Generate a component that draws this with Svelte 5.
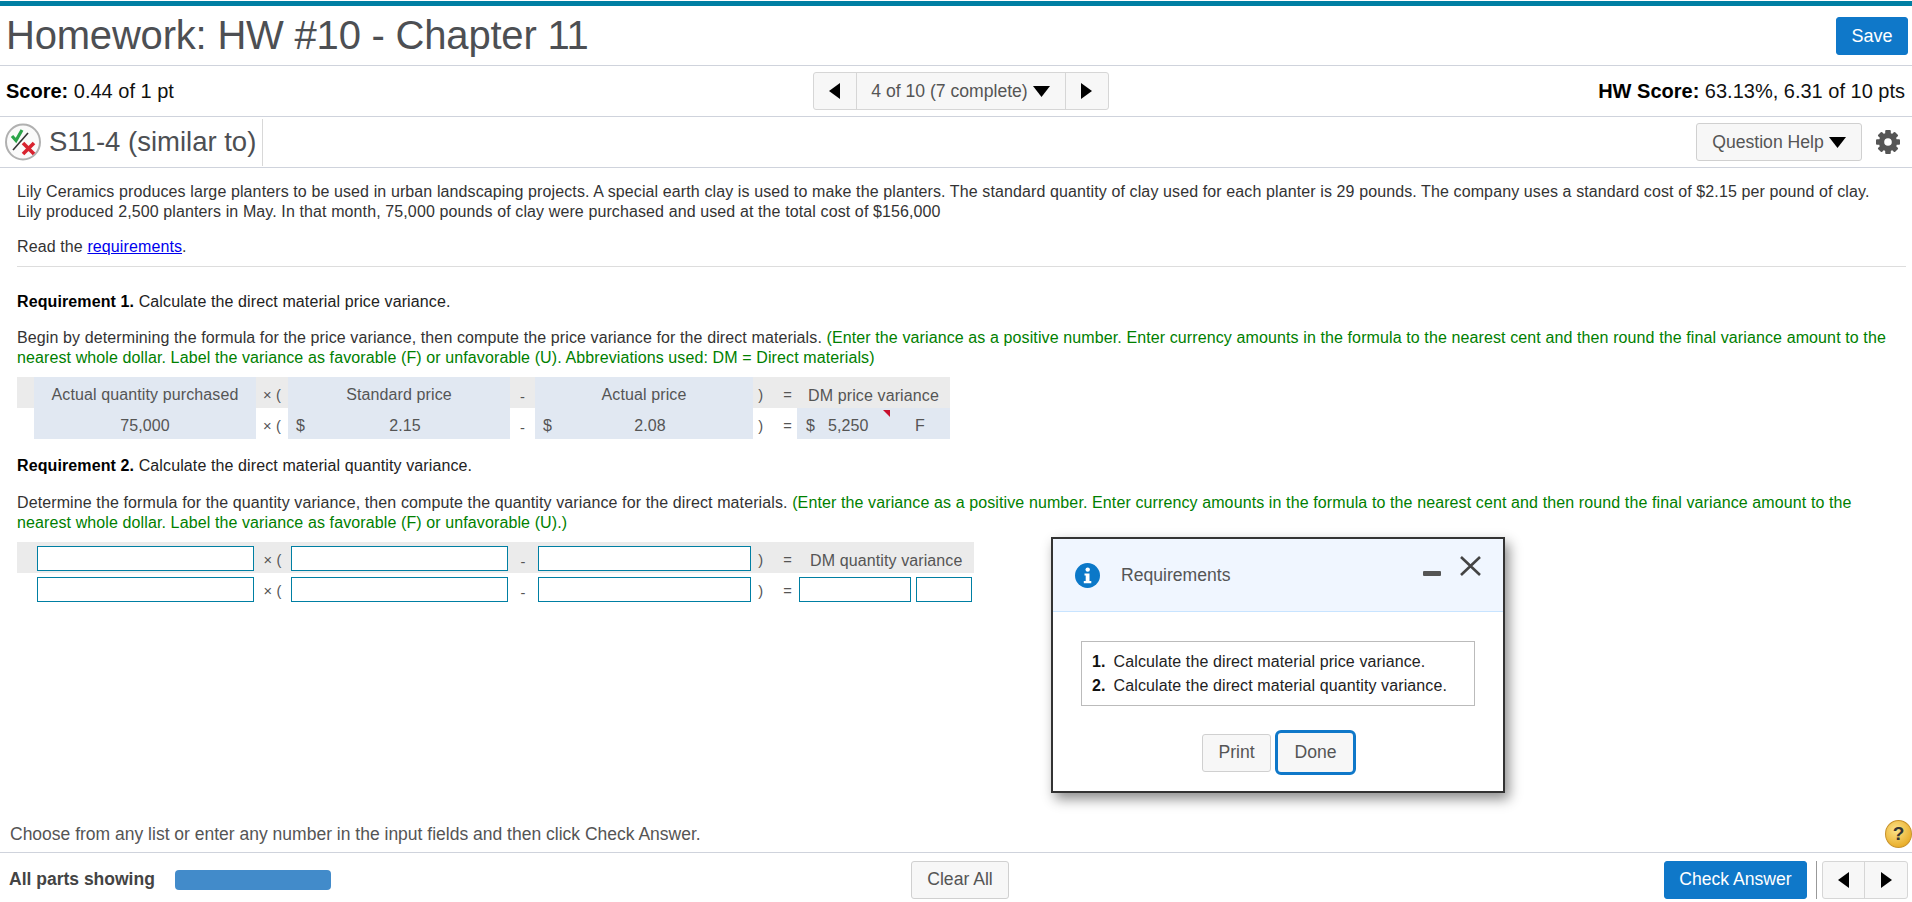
<script>
  const gearTeeth = [0, 45, 90, 135, 180, 225, 270, 315];
</script>

<div class="page">
  <header class="title-bar">
    <h1>Homework: HW #10 - Chapter 11</h1>
    <button class="btn primary save">Save</button>
  </header>

  <div class="score-bar">
    <div class="score"><b>Score:</b> 0.44 of 1 pt</div>
    <div class="pager main-pager">
      <button class="seg arrow" aria-label="Previous">
        <svg width="11" height="16" viewBox="0 0 11 16"><path d="M11 0V16L0 8Z" /></svg>
      </button>
      <button class="seg middle">
        4 of 10 (7 complete)
        <svg width="17" height="11" viewBox="0 0 17 11"><path d="M0 0H17L8.5 11Z" /></svg>
      </button>
      <button class="seg arrow" aria-label="Next">
        <svg width="11" height="16" viewBox="0 0 11 16"><path d="M0 0V16L11 8Z" /></svg>
      </button>
    </div>
    <div class="score hw"><b>HW Score:</b> 63.13%, 6.31 of 10 pts</div>
  </div>

  <div class="question-bar">
    <div class="question-name">
      <svg class="status" width="36" height="38" viewBox="0 0 36 38">
        <ellipse cx="18" cy="19" rx="17" ry="17.5" fill="#fafafa" stroke="#b0b0b0" stroke-width="2" />
        <path d="M7 13 11 17.5 17 7" fill="none" stroke="#2ca54a" stroke-width="3.2" />
        <path d="M8 27 23 10" stroke="#333" stroke-width="1.6" />
        <path d="M18 20 29 31M29 20 18 31" stroke="#d8232f" stroke-width="3.6" />
      </svg>
      <span>S11-4 (similar to)</span>
    </div>
    <div class="question-tools">
      <button class="btn help">
        Question Help
        <svg width="17" height="11" viewBox="0 0 17 11"><path d="M0 0H17L8.5 11Z" /></svg>
      </button>
      <svg class="gear" width="24" height="24" viewBox="0 0 24 24">
        {#each gearTeeth as deg}
          <rect x="9.2" y="0" width="5.6" height="6" rx="1" fill="#555" transform="rotate({deg} 12 12)" />
        {/each}
        <circle cx="12" cy="12" r="6.5" fill="none" stroke="#555" stroke-width="5.4" />
      </svg>
    </div>
  </div>

  <main class="content">
    <p class="intro">
      Lily Ceramics produces large planters to be used in urban landscaping projects. A special earth clay is used to make the planters. The standard quantity of clay used for each planter is 29 pounds. The company uses a standard cost of $2.15 per pound of clay.<br />
      Lily produced 2,500 planters in May. In that month, 75,000 pounds of clay were purchased and used at the total cost of $156,000
    </p>
    <p class="read">Read the <a href="#req">requirements</a>.</p>
    <hr />

    <p class="req-title"><b>Requirement 1.</b> Calculate the direct material price variance.</p>
    <p class="instructions">
      Begin by determining the formula for the price variance, then compute the price variance for the direct materials. <span class="green">(Enter the variance as a positive number. Enter currency amounts in the formula to the nearest cent and then round the final variance amount to the nearest whole dollar. Label the variance as favorable (F) or unfavorable (U). Abbreviations used: DM = Direct materials)</span>
    </p>

    <div class="formula answered">
      <div class="cell head"></div>
      <div class="cell head fill">Actual quantity purchased</div>
      <div class="cell head op">× (</div>
      <div class="cell head fill">Standard price</div>
      <div class="cell head op dash">-</div>
      <div class="cell head fill">Actual price</div>
      <div class="cell head op close"><span>)</span><span>=</span></div>
      <div class="cell head low">DM price variance</div>

      <div class="cell"></div>
      <div class="cell fill">75,000</div>
      <div class="cell op">× (</div>
      <div class="cell fill money"><span class="cur">$</span>2.15</div>
      <div class="cell op dash">-</div>
      <div class="cell fill money"><span class="cur">$</span>2.08</div>
      <div class="cell op close"><span>)</span><span>=</span></div>
      <div class="cell fill result">
        <span class="cur-inline">$</span><span class="amount">5,250</span><span class="flag"></span><span class="fu">F</span>
      </div>
    </div>

    <p class="req-title second"><b>Requirement 2.</b> Calculate the direct material quantity variance.</p>
    <p class="instructions">
      Determine the formula for the quantity variance, then compute the quantity variance for the direct materials. <span class="green">(Enter the variance as a positive number. Enter currency amounts in the formula to the nearest cent and then round the final variance amount to the nearest whole dollar. Label the variance as favorable (F) or unfavorable (U).)</span>
    </p>

    <div class="formula blank">
      <div class="cell head"></div>
      <div class="cell head"><input /></div>
      <div class="cell head op">× (</div>
      <div class="cell head"><input /></div>
      <div class="cell head op dash">-</div>
      <div class="cell head"><input /></div>
      <div class="cell head op close"><span>)</span><span>=</span></div>
      <div class="cell head label low">DM quantity variance</div>

      <div class="cell"></div>
      <div class="cell"><input /></div>
      <div class="cell op">× (</div>
      <div class="cell"><input /></div>
      <div class="cell op dash">-</div>
      <div class="cell"><input /></div>
      <div class="cell op close"><span>)</span><span>=</span></div>
      <div class="cell pair"><input /><input /></div>
    </div>
  </main>

  <div class="hint">
    <span>Choose from any list or enter any number in the input fields and then click Check Answer.</span>
    <span class="hint-icon">?</span>
  </div>

  <footer class="footer">
    <div class="parts">
      <b>All parts showing</b>
      <div class="progress"></div>
    </div>
    <button class="btn clear">Clear All</button>
    <div class="footer-right">
      <button class="btn primary check">Check Answer</button>
      <div class="sep"></div>
      <div class="pager small">
        <button class="seg arrow" aria-label="Previous">
          <svg width="11" height="16" viewBox="0 0 11 16"><path d="M11 0V16L0 8Z" /></svg>
        </button>
        <button class="seg arrow" aria-label="Next">
          <svg width="11" height="16" viewBox="0 0 11 16"><path d="M0 0V16L11 8Z" /></svg>
        </button>
      </div>
    </div>
  </footer>

  <div class="dialog">
    <div class="dialog-head">
      <svg width="25" height="25" viewBox="0 0 25 25">
        <circle cx="12.5" cy="12.5" r="12.5" fill="#0b78c8" />
        <circle cx="12.7" cy="6.6" r="2.2" fill="#fff" />
        <path d="M9.5 10.4h5v7.6h1.8v2.2H8.8V18h1.9v-5.4H9.5Z" fill="#fff" />
      </svg>
      <span class="dialog-title">Requirements</span>
      <span class="minimize"></span>
      <svg class="close-x" width="21" height="20" viewBox="0 0 21 20">
        <path d="M1 1 20 19M20 1 1 19" stroke="#444" stroke-width="2.6" fill="none" />
      </svg>
    </div>
    <div class="dialog-body">
      <ol class="req-list">
        <li><b>1.</b><span>Calculate the direct material price variance.</span></li>
        <li><b>2.</b><span>Calculate the direct material quantity variance.</span></li>
      </ol>
      <div class="dialog-actions">
        <button class="btn print">Print</button>
        <button class="btn done">Done</button>
      </div>
    </div>
  </div>
</div>

<style>
  :global(body) {
    margin: 0;
    background: #fff;
  }

  .page {
    position: relative;
    height: 902px;
    display: flex;
    flex-direction: column;
    overflow: hidden;
    box-sizing: border-box;
    border-top: 1px solid #fff;
    font-family: "Liberation Sans", Arial, sans-serif;
    color: #555;
  }

  p {
    margin: 0;
  }

  button {
    font-family: inherit;
    padding: 0;
    cursor: pointer;
  }

  .btn {
    box-sizing: border-box;
    border: 1px solid #d0d0d0;
    border-radius: 3px;
    background: #f7f7f7;
    color: #555;
    font-size: 17.6px;
  }

  .btn.primary {
    background: #0f78c9;
    border-color: #0f78c9;
    color: #fff;
  }

  .title-bar {
    height: 65px;
    box-sizing: border-box;
    border-top: 5px solid #007fa3;
    border-bottom: 1px solid #cfd3dc;
    display: flex;
    align-items: center;
    justify-content: space-between;
    padding: 0 4px 0 6px;
  }

  h1 {
    margin: 0;
    font-size: 40px;
    letter-spacing: -0.2px;
    font-weight: 400;
    color: #4d4f53;
  }

  .save {
    width: 72px;
    height: 38px;
    font-size: 18px;
    margin-top: 1px;
  }

  .score-bar {
    height: 51px;
    box-sizing: border-box;
    border-bottom: 1px solid #cfd3dc;
    padding: 0 7px 0 6px;
    display: grid;
    grid-template-columns: 1fr auto 1fr;
    align-items: center;
  }

  .score {
    font-size: 20px;
    color: #111;
  }

  .score b {
    color: #000;
  }

  .hw {
    text-align: right;
  }

  .pager {
    display: flex;
    height: 38px;
    box-sizing: border-box;
    border: 1px solid #d6d6d6;
    border-radius: 3px;
    background: #f7f7f7;
  }

  .main-pager {
    margin-left: 10px;
  }

  .seg {
    border: 0;
    background: none;
    display: flex;
    align-items: center;
    justify-content: center;
    gap: 5px;
    color: #555;
    font-size: 17.6px;
    height: 100%;
  }

  .seg svg,
  .help svg {
    fill: #000;
  }

  .seg.arrow {
    width: 42px;
  }

  .seg.middle {
    width: 210px;
    border-left: 1px solid #d6d6d6;
    border-right: 1px solid #d6d6d6;
  }

  .question-bar {
    height: 51px;
    box-sizing: border-box;
    border-bottom: 1px solid #cfd3dc;
    display: flex;
    align-items: center;
    justify-content: space-between;
    padding-left: 5px;
    padding-right: 12px;
  }

  .question-name {
    display: flex;
    align-items: center;
    gap: 8px;
    height: 47px;
    padding-right: 6px;
    border-right: 1px solid #d8d8d8;
    font-size: 27.5px;
    color: #4d4f53;
  }

  .question-tools {
    display: flex;
    align-items: center;
    gap: 14px;
  }

  .help {
    width: 166px;
    height: 38px;
    display: flex;
    align-items: center;
    justify-content: center;
    gap: 5px;
  }

  .content {
    flex: 1;
    padding: 14px 6px 0 17px;
    font-size: 16px;
    letter-spacing: 0.11px;
    line-height: 20px;
    color: #333;
  }

  .read {
    margin-top: 15px;
  }

  a {
    color: #0000ee;
  }

  hr {
    border: 0;
    border-top: 1px solid #ddd;
    margin: 9px 0 0;
  }

  .req-title {
    margin-top: 25px;
    color: #222;
  }

  .req-title b {
    color: #000;
  }

  .req-title.second {
    margin-top: 17px;
  }

  .instructions {
    margin-top: 16px;
  }

  .second + .instructions {
    margin-top: 17px;
  }

  .green {
    color: #008000;
  }

  .formula {
    display: grid;
    margin-top: 9px;
    width: max-content;
    color: #555;
  }

  .answered {
    grid-template-columns: 17px 222px 32px 222px 25px 218px 44px 153px;
    grid-auto-rows: 31px;
  }

  .blank {
    grid-template-columns: 17px 220px 37px 217px 30px 213px 48px 175px;
    grid-auto-rows: 31px;
  }

  .cell {
    display: flex;
    align-items: center;
    justify-content: center;
    position: relative;
    box-sizing: border-box;
    padding-top: 2px;
  }

  .answered .cell,
  .blank .op {
    padding-top: 4px;
  }

  .formula .cell.low {
    padding-top: 7px;
  }

  .formula .cell.dash {
    padding-top: 9px;
  }

  .cell.head {
    background: #ebebeb;
  }

  .cell.fill {
    background: #e1e8f2;
  }

  .op {
    font-size: 14.67px;
  }

  .close {
    gap: 20px;
  }

  .money {
    padding-left: 12px;
  }

  .money .cur {
    position: absolute;
    left: 8px;
  }

  .result {
    justify-content: flex-start;
    padding-left: 9px;
  }

  .amount {
    margin-left: 13px;
  }

  .flag {
    position: absolute;
    left: 86px;
    top: 2px;
    border-top: 7px solid #c8102e;
    border-left: 7px solid transparent;
  }

  .fu {
    position: absolute;
    left: 118px;
  }

  input {
    display: block;
    box-sizing: border-box;
    height: 25px;
    border: 1px solid #007fa3;
    background: #fff;
    padding: 0;
    margin: 0;
    width: 100%;
  }

  .blank .cell:nth-child(2),
  .blank .cell:nth-child(10) {
    padding-left: 3px;
  }

  .label {
    justify-content: flex-start;
    padding-left: 11px;
  }

  .pair {
    justify-content: flex-start;
    gap: 5px;
  }

  .pair input:first-child {
    width: 112px;
  }

  .pair input:last-child {
    width: 56px;
  }

  .hint {
    height: 34px;
    box-sizing: border-box;
    padding-bottom: 2px;
    display: flex;
    align-items: center;
    justify-content: space-between;
    padding-left: 10px;
    font-size: 17.5px;
    color: #555;
  }

  .hint-icon {
    width: 27px;
    height: 28px;
    border-radius: 50%;
    background: radial-gradient(circle at 40% 35%, #fbe28a, #e9ae2a 75%);
    border: 1px solid #c8922a;
    box-sizing: border-box;
    display: flex;
    align-items: center;
    justify-content: center;
    color: #333;
    font-weight: 700;
    font-size: 19px;
  }

  .footer {
    height: 50px;
    box-sizing: border-box;
    border-top: 1px solid #cfd3dc;
    padding-top: 4px;
    display: grid;
    grid-template-columns: 911px 98px 1fr;
    align-items: center;
    padding-right: 4px;
  }

  .parts {
    display: flex;
    align-items: center;
    gap: 20px;
    padding-left: 9px;
    font-size: 17.5px;
    color: #444;
  }

  .progress {
    width: 156px;
    height: 20px;
    border-radius: 4px;
    background: #428bca;
  }

  .clear {
    height: 38px;
  }

  .footer-right {
    display: flex;
    align-items: center;
    justify-content: flex-end;
    gap: 5px;
  }

  .check {
    width: 143px;
    height: 38px;
    margin-right: 4px;
  }

  .sep {
    width: 1px;
    height: 38px;
    background: #999;
  }

  .pager.small .seg.arrow:first-child {
    border-right: 1px solid #d6d6d6;
  }

  /* floating requirements window */
  .dialog {
    position: absolute;
    left: 1051px;
    top: 536px;
    width: 454px;
    height: 256px;
    box-sizing: border-box;
    border: 2px solid #333;
    background: #fff;
    box-shadow: 4px 6px 12px rgba(0, 0, 0, 0.45);
  }

  .dialog-head {
    height: 73px;
    box-sizing: border-box;
    background: #f0f6ff;
    border-bottom: 1px solid #c8e4ff;
    display: flex;
    align-items: center;
    padding-left: 22px;
    position: relative;
  }

  .dialog-title {
    margin-left: 21px;
    font-size: 17.6px;
    color: #555;
  }

  .minimize {
    position: absolute;
    left: 370px;
    top: 32px;
    width: 18px;
    height: 5px;
    background: #555;
    border-radius: 1px;
  }

  .close-x {
    position: absolute;
    left: 407px;
    top: 17px;
  }

  .dialog-body {
    padding: 29px 28px 0;
  }

  .req-list {
    list-style: none;
    margin: 0;
    padding: 8px 10px;
    box-sizing: border-box;
    height: 65px;
    border: 1px solid #bbb;
    font-size: 16px;
    letter-spacing: 0.11px;
    line-height: 24px;
    color: #222;
  }

  .req-list li {
    display: flex;
    gap: 8px;
  }

  .req-list b {
    color: #111;
  }

  .dialog-actions {
    display: flex;
    justify-content: center;
    align-items: center;
    gap: 4px;
    margin-top: 24px;
    padding-left: 2px;
  }

  .print {
    width: 69px;
    height: 38px;
  }

  .done {
    width: 81px;
    height: 45px;
    border: 3px solid #0f78c9;
    border-radius: 6px;
  }
</style>
